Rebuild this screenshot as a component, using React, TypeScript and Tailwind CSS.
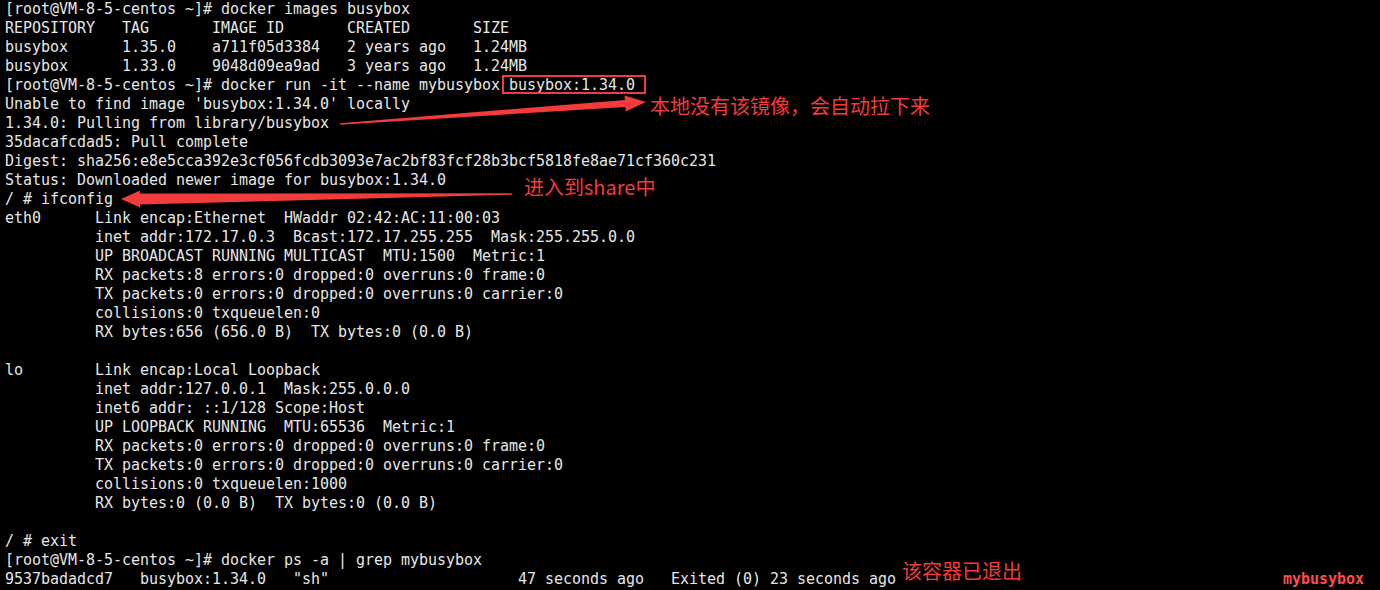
import React from "react";

const before = [
  "[root@VM-8-5-centos ~]# docker images busybox",
  "REPOSITORY   TAG       IMAGE ID       CREATED       SIZE",
  "busybox      1.35.0    a711f05d3384   2 years ago   1.24MB",
  "busybox      1.33.0    9048d09ea9ad   3 years ago   1.24MB",
];

const after = [
  "Unable to find image 'busybox:1.34.0' locally",
  "1.34.0: Pulling from library/busybox",
  "35dacafcdad5: Pull complete",
  "Digest: sha256:e8e5cca392e3cf056fcdb3093e7ac2bf83fcf28b3bcf5818fe8ae71cf360c231",
  "Status: Downloaded newer image for busybox:1.34.0",
  "/ # ifconfig",
  "eth0      Link encap:Ethernet  HWaddr 02:42:AC:11:00:03",
  "          inet addr:172.17.0.3  Bcast:172.17.255.255  Mask:255.255.0.0",
  "          UP BROADCAST RUNNING MULTICAST  MTU:1500  Metric:1",
  "          RX packets:8 errors:0 dropped:0 overruns:0 frame:0",
  "          TX packets:0 errors:0 dropped:0 overruns:0 carrier:0",
  "          collisions:0 txqueuelen:0",
  "          RX bytes:656 (656.0 B)  TX bytes:0 (0.0 B)",
  "",
  "lo        Link encap:Local Loopback",
  "          inet addr:127.0.0.1  Mask:255.0.0.0",
  "          inet6 addr: ::1/128 Scope:Host",
  "          UP LOOPBACK RUNNING  MTU:65536  Metric:1",
  "          RX packets:0 errors:0 dropped:0 overruns:0 frame:0",
  "          TX packets:0 errors:0 dropped:0 overruns:0 carrier:0",
  "          collisions:0 txqueuelen:1000",
  "          RX bytes:0 (0.0 B)  TX bytes:0 (0.0 B)",
  "",
  "/ # exit",
  "[root@VM-8-5-centos ~]# docker ps -a | grep mybusybox",
];

const lastLine =
  '9537badadcd7   busybox:1.34.0   "sh"                     47 seconds ago   Exited (0) 23 seconds ago';

const Line = ({ children }: { children: React.ReactNode }) => (
  <div className="h-[19px] leading-[19px] whitespace-pre">{children}</div>
);

const note =
  "absolute text-[20px] leading-[20px] text-[#f23b3b] whitespace-nowrap font-['Noto_Sans_CJK_SC',sans-serif]";

export default function App() {
  return (
    <div className="relative w-full h-[590px] overflow-hidden bg-black">
      <div className="pl-[5px] text-[15px] tracking-[-0.03px] text-[#e6e6e6] font-['DejaVu_Sans_Mono',monospace]">
        {before.map((l, i) => (
          <Line key={i}>{l}</Line>
        ))}
        <Line>
          {"[root@VM-8-5-centos ~]# docker run -it --name mybusybox "}
          <span className="relative">
            busybox:1.34.0
            <span className="absolute -left-[7px] -right-[11px] -top-[1px] bottom-0 border-2 border-[#f23b3b]" />
          </span>
        </Line>
        {after.map((l, i) => (
          <Line key={i}>{l}</Line>
        ))}
        <div className="flex h-[19px] leading-[19px] whitespace-pre pr-[16px]">
          <span>{lastLine}</span>
          <span className="ml-auto font-bold text-[#ff4d4d]">mybusybox</span>
        </div>
      </div>

      {/* annotations drawn over the terminal */}
      <svg className="absolute left-0 top-0" width="1380" height="590">
        <polygon
          fill="#f23b3b"
          points="339.9,123.2 624.9,99.9 624.6,95.4 646,102 625.7,111.4 625.4,106.9 340.1,124.8"
        />
        <polygon
          fill="#f23b3b"
          points="512,193.3 140,193.6 140,190.5 121,199 140,207.5 140,204.4 512,194.7"
        />
      </svg>
      <div className={`${note} left-[650px] top-[96px]`}>
        本地没有该镜像，会自动拉下来
      </div>
      <div className={`${note} left-[524px] top-[177px]`}>进入到share中</div>
      <div className={`${note} left-[902px] top-[561px]`}>该容器已退出</div>
    </div>
  );
}
